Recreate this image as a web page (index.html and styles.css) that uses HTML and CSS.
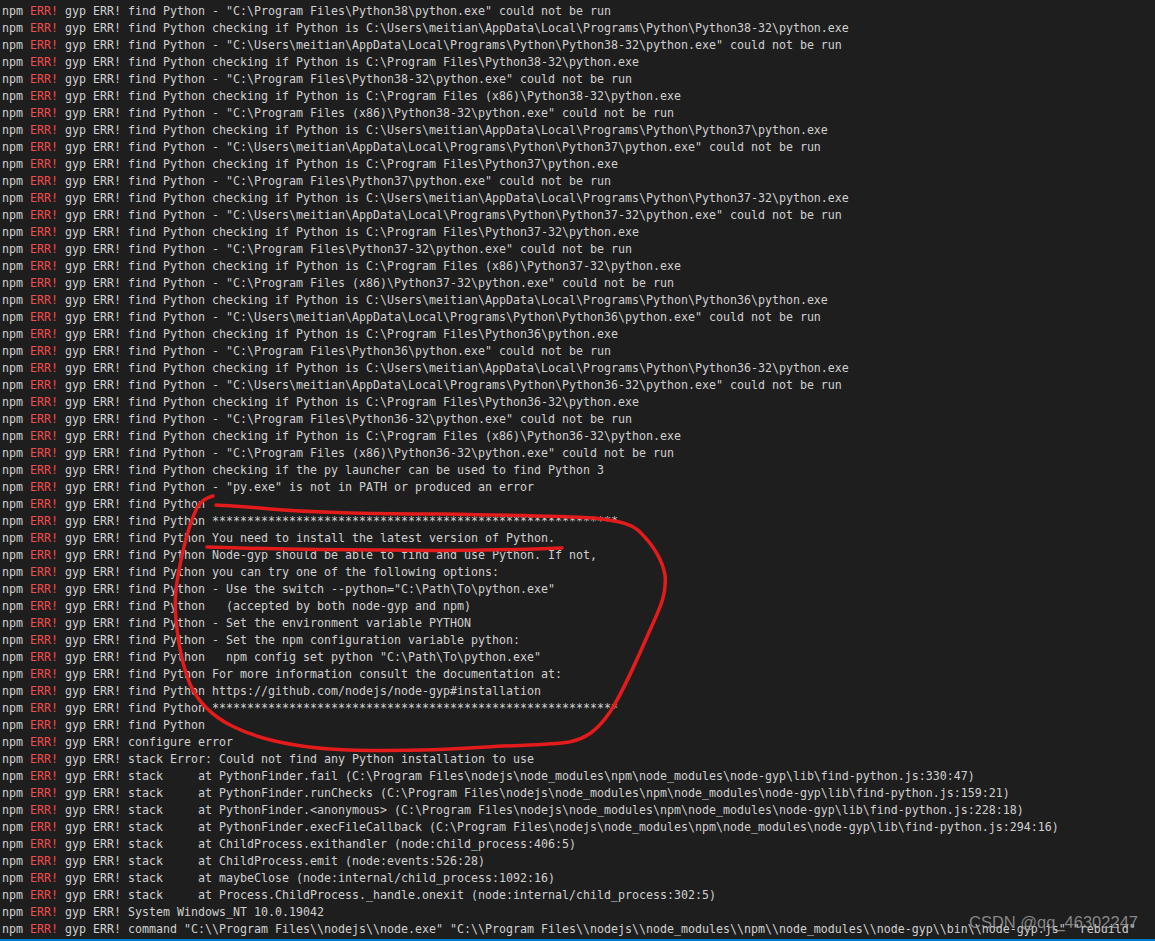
FILE: index.html
```html
<!DOCTYPE html>
<html lang="en">
<head>
<meta charset="utf-8">
<title>npm ERR</title>
<link rel="stylesheet" href="styles.css">
</head>
<body>
<main class="terminal">
<pre class="log"><span class="n">npm <b>ERR!</b> gyp ERR! find Python - "C:\Program Files\Python38\python.exe" could not be run</span>
<span class="n">npm <b>ERR!</b> gyp ERR! find Python checking if Python is C:\Users\meitian\AppData\Local\Programs\Python\Python38-32\python.exe</span>
<span class="n">npm <b>ERR!</b> gyp ERR! find Python - "C:\Users\meitian\AppData\Local\Programs\Python\Python38-32\python.exe" could not be run</span>
<span class="n">npm <b>ERR!</b> gyp ERR! find Python checking if Python is C:\Program Files\Python38-32\python.exe</span>
<span class="n">npm <b>ERR!</b> gyp ERR! find Python - "C:\Program Files\Python38-32\python.exe" could not be run</span>
<span class="n">npm <b>ERR!</b> gyp ERR! find Python checking if Python is C:\Program Files (x86)\Python38-32\python.exe</span>
<span class="n">npm <b>ERR!</b> gyp ERR! find Python - "C:\Program Files (x86)\Python38-32\python.exe" could not be run</span>
<span class="n">npm <b>ERR!</b> gyp ERR! find Python checking if Python is C:\Users\meitian\AppData\Local\Programs\Python\Python37\python.exe</span>
<span class="n">npm <b>ERR!</b> gyp ERR! find Python - "C:\Users\meitian\AppData\Local\Programs\Python\Python37\python.exe" could not be run</span>
<span class="n">npm <b>ERR!</b> gyp ERR! find Python checking if Python is C:\Program Files\Python37\python.exe</span>
<span class="n">npm <b>ERR!</b> gyp ERR! find Python - "C:\Program Files\Python37\python.exe" could not be run</span>
<span class="n">npm <b>ERR!</b> gyp ERR! find Python checking if Python is C:\Users\meitian\AppData\Local\Programs\Python\Python37-32\python.exe</span>
<span class="n">npm <b>ERR!</b> gyp ERR! find Python - "C:\Users\meitian\AppData\Local\Programs\Python\Python37-32\python.exe" could not be run</span>
<span class="n">npm <b>ERR!</b> gyp ERR! find Python checking if Python is C:\Program Files\Python37-32\python.exe</span>
<span class="n">npm <b>ERR!</b> gyp ERR! find Python - "C:\Program Files\Python37-32\python.exe" could not be run</span>
<span class="n">npm <b>ERR!</b> gyp ERR! find Python checking if Python is C:\Program Files (x86)\Python37-32\python.exe</span>
<span class="n">npm <b>ERR!</b> gyp ERR! find Python - "C:\Program Files (x86)\Python37-32\python.exe" could not be run</span>
<span class="n">npm <b>ERR!</b> gyp ERR! find Python checking if Python is C:\Users\meitian\AppData\Local\Programs\Python\Python36\python.exe</span>
<span class="n">npm <b>ERR!</b> gyp ERR! find Python - "C:\Users\meitian\AppData\Local\Programs\Python\Python36\python.exe" could not be run</span>
<span class="n">npm <b>ERR!</b> gyp ERR! find Python checking if Python is C:\Program Files\Python36\python.exe</span>
<span class="n">npm <b>ERR!</b> gyp ERR! find Python - "C:\Program Files\Python36\python.exe" could not be run</span>
<span class="n">npm <b>ERR!</b> gyp ERR! find Python checking if Python is C:\Users\meitian\AppData\Local\Programs\Python\Python36-32\python.exe</span>
<span class="n">npm <b>ERR!</b> gyp ERR! find Python - "C:\Users\meitian\AppData\Local\Programs\Python\Python36-32\python.exe" could not be run</span>
<span class="n">npm <b>ERR!</b> gyp ERR! find Python checking if Python is C:\Program Files\Python36-32\python.exe</span>
<span class="n">npm <b>ERR!</b> gyp ERR! find Python - "C:\Program Files\Python36-32\python.exe" could not be run</span>
<span class="n">npm <b>ERR!</b> gyp ERR! find Python checking if Python is C:\Program Files (x86)\Python36-32\python.exe</span>
<span class="n">npm <b>ERR!</b> gyp ERR! find Python - "C:\Program Files (x86)\Python36-32\python.exe" could not be run</span>
<span class="n">npm <b>ERR!</b> gyp ERR! find Python checking if the py launcher can be used to find Python 3</span>
<span class="n">npm <b>ERR!</b> gyp ERR! find Python - "py.exe" is not in PATH or produced an error</span>
<span class="n">npm <b>ERR!</b> gyp ERR! find Python</span>
<span class="n">npm <b>ERR!</b> gyp ERR! find Python **********************************************************</span>
<span class="n">npm <b>ERR!</b> gyp ERR! find Python You need to install the latest version of Python.</span>
<span class="n">npm <b>ERR!</b> gyp ERR! find Python Node-gyp should be able to find and use Python. If not,</span>
<span class="n">npm <b>ERR!</b> gyp ERR! find Python you can try one of the following options:</span>
<span class="n">npm <b>ERR!</b> gyp ERR! find Python - Use the switch --python="C:\Path\To\python.exe"</span>
<span class="n">npm <b>ERR!</b> gyp ERR! find Python   (accepted by both node-gyp and npm)</span>
<span class="n">npm <b>ERR!</b> gyp ERR! find Python - Set the environment variable PYTHON</span>
<span class="n">npm <b>ERR!</b> gyp ERR! find Python - Set the npm configuration variable python:</span>
<span class="n">npm <b>ERR!</b> gyp ERR! find Python   npm config set python "C:\Path\To\python.exe"</span>
<span class="n">npm <b>ERR!</b> gyp ERR! find Python For more information consult the documentation at:</span>
<span class="n">npm <b>ERR!</b> gyp ERR! find Python https://github.com/nodejs/node-gyp#installation</span>
<span class="n">npm <b>ERR!</b> gyp ERR! find Python **********************************************************</span>
<span class="n">npm <b>ERR!</b> gyp ERR! find Python</span>
<span class="n">npm <b>ERR!</b> gyp ERR! configure error</span>
<span class="n">npm <b>ERR!</b> gyp ERR! stack Error: Could not find any Python installation to use</span>
<span class="n">npm <b>ERR!</b> gyp ERR! stack     at PythonFinder.fail (C:\Program Files\nodejs\node_modules\npm\node_modules\node-gyp\lib\find-python.js:330:47)</span>
<span class="n">npm <b>ERR!</b> gyp ERR! stack     at PythonFinder.runChecks (C:\Program Files\nodejs\node_modules\npm\node_modules\node-gyp\lib\find-python.js:159:21)</span>
<span class="n">npm <b>ERR!</b> gyp ERR! stack     at PythonFinder.&lt;anonymous&gt; (C:\Program Files\nodejs\node_modules\npm\node_modules\node-gyp\lib\find-python.js:228:18)</span>
<span class="n">npm <b>ERR!</b> gyp ERR! stack     at PythonFinder.execFileCallback (C:\Program Files\nodejs\node_modules\npm\node_modules\node-gyp\lib\find-python.js:294:16)</span>
<span class="n">npm <b>ERR!</b> gyp ERR! stack     at ChildProcess.exithandler (node:child_process:406:5)</span>
<span class="n">npm <b>ERR!</b> gyp ERR! stack     at ChildProcess.emit (node:events:526:28)</span>
<span class="n">npm <b>ERR!</b> gyp ERR! stack     at maybeClose (node:internal/child_process:1092:16)</span>
<span class="n">npm <b>ERR!</b> gyp ERR! stack     at Process.ChildProcess._handle.onexit (node:internal/child_process:302:5)</span>
<span class="n">npm <b>ERR!</b> gyp ERR! System Windows_NT 10.0.19042</span>
<span class="n">npm <b>ERR!</b> gyp ERR! command "C:\\Program Files\\nodejs\\node.exe" "C:\\Program Files\\nodejs\\node_modules\\npm\\node_modules\\node-gyp\\bin\\node-gyp.js" "rebuild"</span></pre>
</main>
<footer class="statusbar"></footer>
<svg class="ink" width="1155" height="941" viewBox="0 0 1155 941" aria-hidden="true">
<path d="M213 496C204 498 199 503 196 510C189 525 184 545 180 565C176 585 174 600 176 620C178 640 182 665 190 684C198 702 212 716 232 726C258 739 290 746 330 749C380 752 440 750 487 747C520 745 550 745 569 742C585 739 597 731 610 712C622 694 636 662 650 630C660 608 667 594 665 575C662 558 652 544 640 532C632 524 620 521 594 518C560 516 500 515 440 514C380 514 320 513 270 509C250 507 230 506 216 505"/>
<path d="M207 547C270 549 330 550 380 550C440 551 510 550 562 548"/>
</svg>
<div class="watermark">CSDN @qq_46302247</div>
</body>
</html>
```
FILE: styles.css
```css
html, body {
  margin: 0;
  height: 100%;
}
body {
  position: relative;
  display: flex;
  flex-direction: column;
  width: 1155px;
  height: 941px;
  overflow: hidden;
  background: #1e1e1e;
}
.terminal {
  flex: 1;
  min-height: 0;
  overflow: hidden;
  padding: 3px 0 0 2px;
}
.log {
  margin: 0;
  font-family: "DejaVu Sans Mono", monospace;
  font-size: 11.64px;
  line-height: 17px;
  color: #d0d0d0;
  white-space: pre;
}
.log b {
  font-weight: normal;
  color: #f14c4c;
}
.statusbar {
  flex: none;
  height: 2px;
  background: #007acc;
}
.ink {
  position: absolute;
  left: 0;
  top: 0;
  fill: none;
  stroke: #e41b1b;
  stroke-width: 3.5;
  stroke-linecap: round;
  stroke-linejoin: round;
}
.watermark {
  position: absolute;
  right: 17px;
  top: 912px;
  font-family: "Liberation Sans", sans-serif;
  font-size: 16.5px;
  line-height: 20px;
  color: rgba(170, 170, 170, 0.75);
  white-space: nowrap;
}
```
